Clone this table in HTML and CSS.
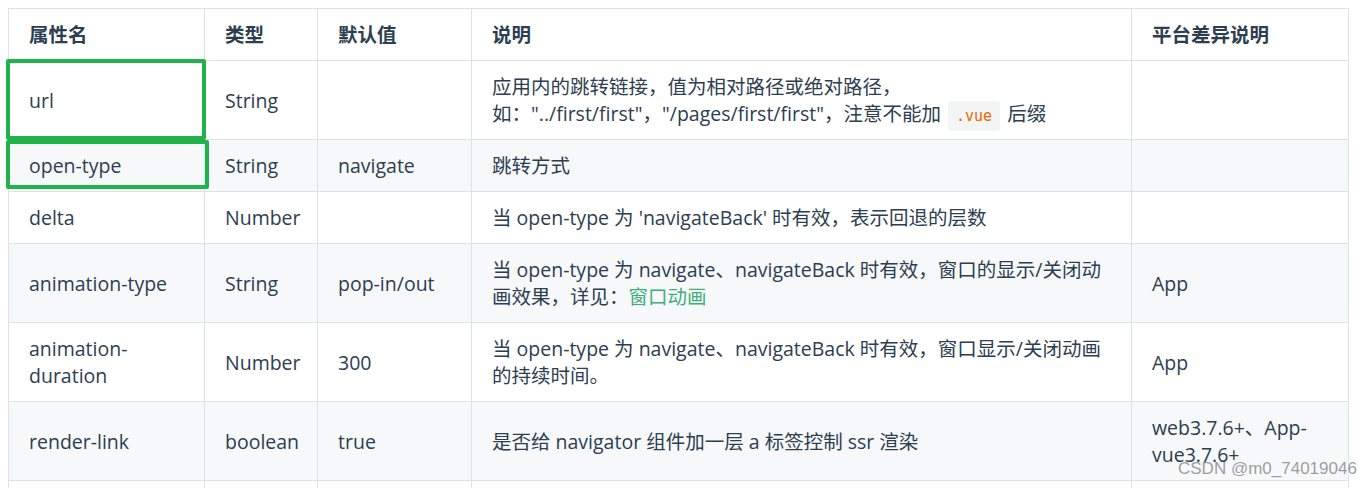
FILE: index.html
```html
<!DOCTYPE html>
<html lang="zh-CN">
<head>
<meta charset="utf-8">
<title>navigator 属性</title>
<link rel="stylesheet" href="styles.css">
</head>
<body>
<table class="props">
  <colgroup>
    <col class="c-name">
    <col class="c-type">
    <col class="c-def">
    <col class="c-desc">
    <col class="c-plat">
  </colgroup>
  <thead>
    <tr>
      <th>属性名</th>
      <th>类型</th>
      <th>默认值</th>
      <th>说明</th>
      <th>平台差异说明</th>
    </tr>
  </thead>
  <tbody>
    <tr>
      <td>url</td>
      <td>String</td>
      <td></td>
      <td>应用内的跳转链接，值为相对路径或绝对路径，<br>如："../first/first"，"/pages/first/first"，注意不能加 <code>.vue</code> 后缀</td>
      <td></td>
    </tr>
    <tr>
      <td>open-type</td>
      <td>String</td>
      <td>navigate</td>
      <td>跳转方式</td>
      <td></td>
    </tr>
    <tr>
      <td>delta</td>
      <td>Number</td>
      <td></td>
      <td>当 open-type 为 'navigateBack' 时有效，表示回退的层数</td>
      <td></td>
    </tr>
    <tr>
      <td>animation-type</td>
      <td>String</td>
      <td>pop-in/out</td>
      <td>当 open-type 为 navigate、navigateBack 时有效，窗口的显示/关闭动画效果，详见：<a href="#">窗口动画</a></td>
      <td>App</td>
    </tr>
    <tr>
      <td>animation-duration</td>
      <td>Number</td>
      <td>300</td>
      <td>当 open-type 为 navigate、navigateBack 时有效，窗口显示/关闭动画的持续时间。</td>
      <td>App</td>
    </tr>
    <tr>
      <td>render-link</td>
      <td>boolean</td>
      <td>true</td>
      <td>是否给 navigator 组件加一层 a 标签控制 ssr 渲染</td>
      <td>web3.7.6+、App-vue3.7.6+</td>
    </tr>
    <tr>
      <td>hover-class</td>
      <td>String</td>
      <td>navigator-hover</td>
      <td>指定点击时的样式类，当hover-class="none"时，没有点击态效果</td>
      <td></td>
    </tr>
  </tbody>
</table>
<div class="mark mark-url"></div>
<div class="mark mark-open"></div>
<div class="watermark">CSDN @m0_74019046</div>
</body>
</html>
```

FILE: styles.css
```css
html, body {
  background: #ffffff;
}
body {
  margin: 8px;
  font-family: "Open Sans", "Noto Sans CJK SC", sans-serif;
  font-size: 19.5px;
  color: #2c3e50;
}
.props {
  border-collapse: collapse;
  table-layout: fixed;
  width: 1341px;
}
.c-name { width: 196px; }
.c-type { width: 113px; }
.c-def { width: 154px; }
.c-desc { width: 660px; }
.c-plat { width: 217px; }
.props th,
.props td {
  border: 1px solid #dfe2e5;
  padding: 12px 20px;
  line-height: 27px;
  height: 27px;
  text-align: left;
  vertical-align: middle;
}
.props th {
  font-weight: 700;
}
.props tbody tr:nth-child(2n) {
  background: #f6f8fa;
}
.props code {
  font-family: "DejaVu Sans Mono", monospace;
  font-size: 15px;
  line-height: 1;
  color: #e96900;
  background: rgba(27, 31, 35, 0.05);
  padding: 6px 8px;
  border-radius: 4px;
  margin: 0 2px;
}
.props a {
  color: #3eaf7c;
  text-decoration: none;
  font-weight: 400;
}
.mark {
  position: absolute;
  border: 4px solid #22b24c;
  border-radius: 2px;
  box-sizing: border-box;
}
.mark-url {
  left: 6px;
  top: 59px;
  width: 200px;
  height: 81px;
}
.mark-open {
  left: 6px;
  top: 140px;
  width: 203px;
  height: 49px;
}
.watermark {
  position: absolute;
  left: 1178px;
  top: 459px;
  font-family: "Liberation Sans", sans-serif;
  font-size: 17px;
  color: rgba(140, 140, 140, 0.85);
  white-space: nowrap;
}
```
